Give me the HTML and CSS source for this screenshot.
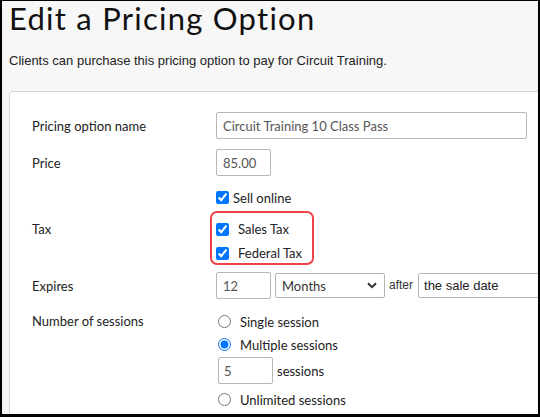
FILE: index.html
```html
<!DOCTYPE html>
<html lang="en">
<head>
<meta charset="utf-8">
<title>Edit a Pricing Option</title>
<link rel="stylesheet" href="styles.css">
</head>
<body>
<div class="frame">
  <h1 class="title">Edit a Pricing Option</h1>
  <p class="intro">Clients can purchase this pricing option to pay for Circuit Training.</p>
  <div class="panel">
    <div class="row row-name">
      <label class="lbl">Pricing option name</label>
      <div class="ctl"><input class="field field-name" type="text" value="Circuit Training 10 Class Pass"></div>
    </div>
    <div class="row row-price">
      <label class="lbl">Price</label>
      <div class="ctl"><input class="field field-small" type="text" value="85.00"></div>
    </div>
    <div class="row row-online">
      <span class="lbl"></span>
      <div class="ctl"><label class="check check-online"><input type="checkbox" checked>Sell online</label></div>
    </div>
    <div class="row row-tax">
      <span class="lbl lbl-top">Tax</span>
      <div class="ctl">
        <div class="tax-group">
          <label class="check check-tax"><input type="checkbox" checked>Sales Tax</label>
          <label class="check check-tax"><input type="checkbox" checked>Federal Tax</label>
        </div>
      </div>
    </div>
    <div class="row row-expires">
      <label class="lbl">Expires</label>
      <div class="ctl ctl-inline">
        <input class="field field-small" type="text" value="12">
        <div class="select-wrap">
          <select class="select"><option>Months</option></select>
          <svg class="chev" width="10" height="7" viewBox="0 0 10 7"><path d="M1 1.2 L5 5.2 L9 1.2" fill="none" stroke="#333" stroke-width="2"/></svg>
        </div>
        <span class="after">after</span>
        <input class="field field-date" type="text" value="the sale date">
      </div>
    </div>
    <div class="row row-sessions">
      <span class="lbl lbl-sessions">Number of sessions</span>
      <div class="ctl">
        <label class="radio"><input type="radio" name="s">Single session</label>
        <label class="radio"><input type="radio" name="s" checked>Multiple sessions</label>
        <div class="count-line"><input class="field field-count" type="text" value="5"><span class="count-unit">sessions</span></div>
        <label class="radio radio-last"><input type="radio" name="s">Unlimited sessions</label>
      </div>
    </div>
  </div>
</div>
</body>
</html>
```

FILE: styles.css
```css
html, body {
  margin: 0;
  padding: 0;
}

.frame {
  box-sizing: border-box;
  width: 540px;
  height: 417px;
  overflow: hidden;
  background: #f7f7f7;
  border-top: 1px solid #000;
  border-left: 2px solid #000;
  border-right: 2px solid #000;
  border-bottom: 3px solid #000;
  padding-left: 7px;
}

.title {
  margin: 0;
  font-family: "Lato", sans-serif;
  font-weight: 400;
  font-size: 31px;
  line-height: 34px;
  letter-spacing: 1.25px;
  color: #111;
}

.intro {
  margin: 18px 0 0;
  font-family: "Liberation Sans", Arial, sans-serif;
  font-size: 13px;
  line-height: 16px;
  color: #222;
}

.panel {
  margin-top: 22px;
  width: 640px;
  height: 400px;
  box-sizing: border-box;
  background: #fff;
  border: 1px solid #d6d6d6;
  border-radius: 4px;
  padding: 20px 0 0 22px;
  font-family: "Lato", sans-serif;
  font-size: 13px;
  color: #222;
}

.row {
  display: flex;
  align-items: center;
}

.lbl {
  flex: 0 0 184px;
  line-height: 20px;
  color: #222;
}

.ctl {
  display: flex;
  flex-direction: column;
  align-items: flex-start;
}

.ctl-inline {
  flex-direction: row;
  align-items: center;
}

.field {
  box-sizing: border-box;
  height: 27px;
  margin: 0;
  padding: 0 6px;
  border: 1px solid #b7b7b7;
  border-radius: 2px;
  background: #fff;
  font-family: "Lato", sans-serif;
  font-size: 13px;
  color: #555;
  outline: none;
}

.field-name { width: 311px; }
.field-small { width: 55px; }

.row-price { margin-top: 10px; }

.row-online { margin-top: 10px; }

.check {
  display: flex;
  align-items: center;
  height: 23px;
  color: #222;
}

.check input {
  width: 13px;
  height: 13px;
  margin: 0 4px 0 0;
}

.row-tax {
  margin-top: 8px;
  align-items: flex-start;
}

.lbl-top { line-height: 24px; }

.tax-group {
  position: relative;
}

.tax-group::before {
  content: "";
  position: absolute;
  left: -6px;
  top: -6px;
  width: 104px;
  height: 54px;
  box-sizing: border-box;
  border: 2px solid #ef4247;
  border-radius: 7px;
}

.check-tax { height: 24px; }
.check-tax input { margin-right: 9px; }

.row-expires { margin-top: 7px; }

.select-wrap {
  position: relative;
  margin-left: 4px;
}

.select {
  box-sizing: border-box;
  width: 110px;
  height: 25px;
  margin: 0;
  padding: 0 0 0 6px;
  border: 1px solid #b7b7b7;
  border-radius: 2px;
  background: #fff;
  font-family: "Lato", sans-serif;
  font-size: 13px;
  color: #333;
  -webkit-appearance: none;
  appearance: none;
  outline: none;
}

.chev {
  position: absolute;
  right: 8px;
  top: 9px;
}

.after {
  margin: 0 5px 0 4px;
  font-family: "Liberation Sans", Arial, sans-serif;
  font-size: 12px;
  color: #333;
  position: relative;
  top: -1px;
}

.field-date {
  width: 160px;
  height: 25px;
  padding-left: 5px;
  font-family: "Liberation Sans", Arial, sans-serif;
  color: #222;
}

.row-sessions {
  margin-top: 11px;
  align-items: flex-start;
}

.lbl-sessions { line-height: 23px; }

.radio {
  display: flex;
  align-items: center;
  height: 23px;
  color: #222;
}

.radio input {
  width: 13px;
  height: 13px;
  margin: 0 9px 0 2px;
}

.count-line {
  display: flex;
  align-items: center;
  margin: 1px 0 0 2px;
}

.field-count {
  width: 55px;
  padding-left: 5px;
}

.count-unit {
  margin-left: 4px;
  color: #222;
}

.radio-last { margin-top: 4px; }
```
